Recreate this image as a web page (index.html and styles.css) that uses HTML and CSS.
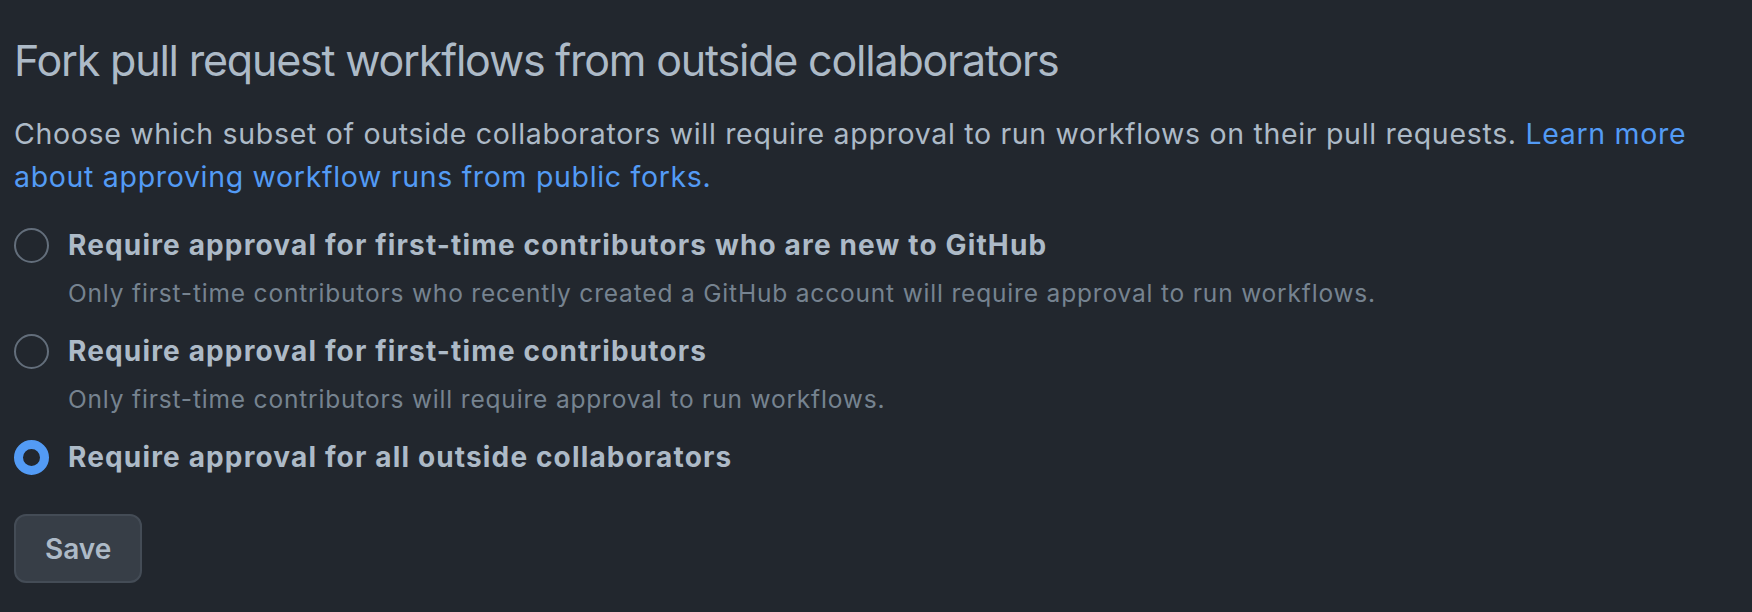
FILE: index.html
```html
<!DOCTYPE html>
<html lang="en">
<head>
<meta charset="utf-8">
<title>Fork pull request workflows</title>
<link rel="stylesheet" href="styles.css">
</head>
<body>
<main class="section">
  <h2 class="heading">Fork pull request workflows from outside collaborators</h2>
  <p class="intro">Choose which subset of outside collaborators will require approval to run workflows on their pull requests. <a class="link" href="#">Learn more about approving workflow runs from public forks.</a></p>
  <form class="options">
    <label class="option">
      <input class="radio" type="radio" name="approval">
      <span class="option-title">Require approval for first-time contributors who are new to GitHub</span>
      <span class="option-note">Only first-time contributors who recently created a GitHub account will require approval to run workflows.</span>
    </label>
    <label class="option">
      <input class="radio" type="radio" name="approval">
      <span class="option-title">Require approval for first-time contributors</span>
      <span class="option-note">Only first-time contributors will require approval to run workflows.</span>
    </label>
    <label class="option">
      <input class="radio" type="radio" name="approval" checked>
      <span class="option-title">Require approval for all outside collaborators</span>
    </label>
    <div class="actions">
      <button class="btn" type="button">Save</button>
    </div>
  </form>
</main>
</body>
</html>
```
FILE: styles.css
```css
html, body {
  margin: 0;
  padding: 0;
  background: #22272e;
}
body {
  font-family: Inter, "Noto Sans", "Liberation Sans", sans-serif;
  color: #adbac7;
  width: 1752px;
  height: 612px;
  overflow: hidden;
}
.section {
  padding: 33px 44px 0 14px;
}
.heading {
  margin: 0;
  font-size: 43px;
  line-height: 54px;
  font-weight: 400;
  letter-spacing: -1.2px;
  color: #adbac7;
}
.intro {
  margin: 25px 0 0;
  font-size: 28.5px;
  line-height: 43px;
  letter-spacing: 0.68px;
}
.link {
  color: #539bf5;
  text-decoration: none;
}
.options {
  margin: 26px 0 0;
  display: flex;
  flex-direction: column;
  gap: 19px;
}
.option {
  display: grid;
  grid-template-columns: 35px 1fr;
  column-gap: 19px;
  align-items: center;
}
.radio {
  appearance: none;
  -webkit-appearance: none;
  margin: 0;
  width: 35px;
  height: 35px;
  box-sizing: border-box;
  border: 2px solid #636e7b;
  border-radius: 50%;
  background: transparent;
  grid-column: 1;
  grid-row: 1;
}
.radio:checked {
  border: 9.5px solid #539bf5;
}
.option-title {
  grid-column: 2;
  grid-row: 1;
  font-size: 28px;
  line-height: 42px;
  font-weight: 700;
  letter-spacing: 1.15px;
  color: #adbac7;
}
.option-note {
  grid-column: 2;
  grid-row: 2;
  margin-top: 9px;
  font-size: 24.5px;
  line-height: 36px;
  letter-spacing: 0.82px;
  color: #768390;
}
.actions {
  margin-top: 17px;
}
.btn {
  height: 69px;
  padding: 0 29px;
  box-sizing: border-box;
  border: 2px solid #444c56;
  border-radius: 12px;
  background: #373e47;
  color: #adbac7;
  font-family: inherit;
  font-size: 28px;
  font-weight: 600;
  letter-spacing: 0;
}
```
